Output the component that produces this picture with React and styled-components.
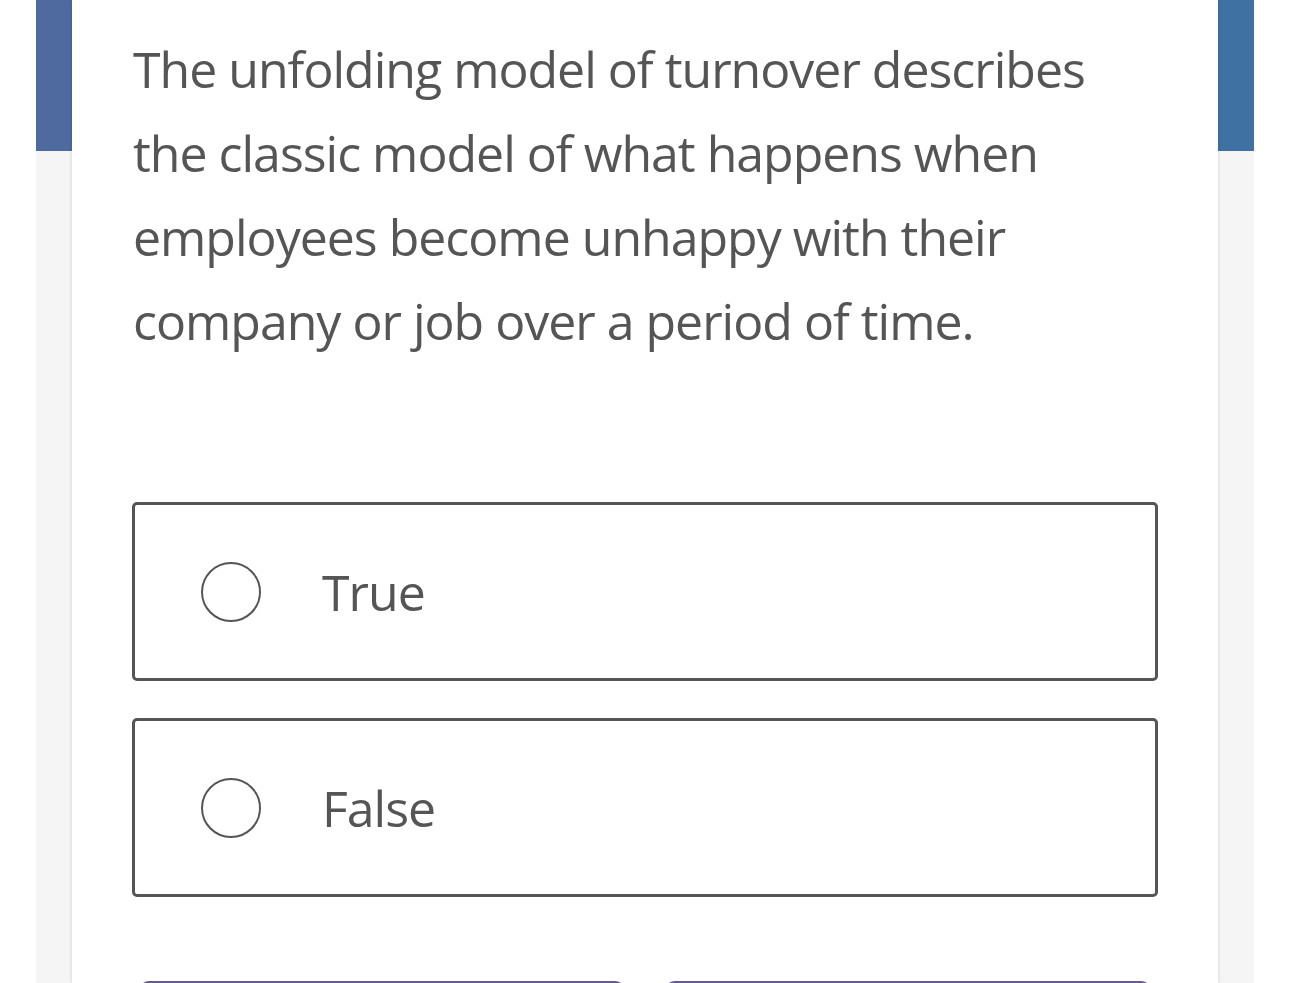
import React from "react";
import styled, { createGlobalStyle } from "styled-components";

const Global = createGlobalStyle`
  html, body {
    margin: 0;
    padding: 0;
    background: #ffffff;
  }
  body {
    font-family: "Open Sans", "Noto Sans", sans-serif;
    color: #555555;
  }
`;

const Page = styled.div`
  display: flex;
  justify-content: center;
  height: 983px;
  overflow: hidden;
  padding: 0 36px;
  box-sizing: border-box;
`;

const Rail = styled.div`
  flex: 0 0 36px;
  display: flex;
  flex-direction: column;
  background: #f5f5f5;
`;

const RailBand = styled.div`
  height: 151px;
  background: ${(p) => p.$color};
`;

const Card = styled.main`
  flex: 1 1 auto;
  background: #ffffff;
  box-shadow: 0 0 4px rgba(0, 0, 0, 0.16);
  position: relative;
  z-index: 1;
  padding: 27px 60px 0 60px;
  box-sizing: border-box;
  display: flex;
  flex-direction: column;
`;

const Question = styled.p`
  margin: 0 0 0 1px;
  font-size: 50px;
  line-height: 84px;
  color: #555555;
  letter-spacing: -1px;
`;

const Options = styled.div`
  display: flex;
  flex-direction: column;
  gap: 37px;
  margin-top: 139px;
`;

const Option = styled.label`
  display: flex;
  align-items: center;
  height: 179px;
  box-sizing: border-box;
  border: 3px solid #555555;
  border-radius: 5px;
  padding-left: 66px;
  cursor: pointer;
`;

const Radio = styled.span`
  width: 60px;
  height: 60px;
  box-sizing: border-box;
  border: 2.5px solid #555555;
  border-radius: 50%;
  flex: 0 0 auto;
`;

const OptionText = styled.span`
  margin-left: 61px;
  font-size: 50px;
  letter-spacing: -1px;
  color: #555555;
`;

const Actions = styled.div`
  display: flex;
  gap: 40px;
  margin-top: 84px;
  padding: 0 7px;
`;

const ActionButton = styled.button`
  flex: 1 1 0;
  height: 90px;
  border: none;
  border-radius: 10px;
  background: #685a8e;
`;

export default function App() {
  return (
    <>
      <Global />
      <Page>
        <Rail>
          <RailBand $color="#4f6a9f" />
        </Rail>
        <Card>
          <Question>
            The unfolding model of turnover describes the classic model of what
            happens when employees become unhappy with their company or job over
            a period of time.
          </Question>
          <Options>
            <Option>
              <Radio />
              <OptionText>True</OptionText>
            </Option>
            <Option>
              <Radio />
              <OptionText>False</OptionText>
            </Option>
          </Options>
          <Actions>
            <ActionButton aria-label="Previous" />
            <ActionButton aria-label="Next" />
          </Actions>
        </Card>
        <Rail>
          <RailBand $color="#3f71a3" />
        </Rail>
      </Page>
    </>
  );
}
